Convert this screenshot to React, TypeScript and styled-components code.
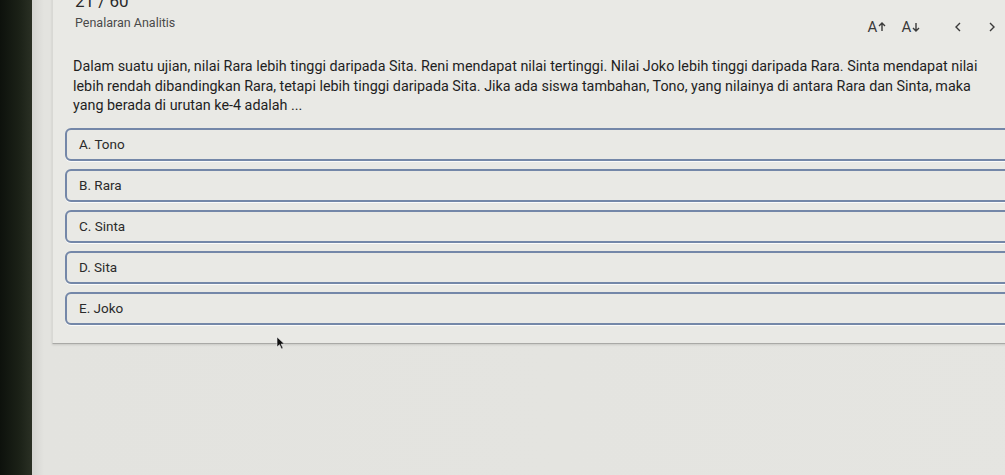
import React from 'react'
import styled, { createGlobalStyle } from 'styled-components'

const GlobalStyle = createGlobalStyle`
  html, body {
    margin: 0;
    padding: 0;
    background: #e2e2de;
    overflow: hidden;
  }
  body {
    font-family: Roboto, "Noto Sans", Arial, sans-serif;
  }
`

const Frame = styled.div`
  width: 1005px;
  height: 475px;
  display: flex;
  overflow: hidden;
  position: relative;
`

const Bezel = styled.div`
  width: 32px;
  flex-shrink: 0;
  background: linear-gradient(90deg, #0d110c 0%, #1b2117 60%, #2a3024 100%);
`

const Screen = styled.div`
  flex: 1;
  display: flex;
  flex-direction: column;
  background: linear-gradient(90deg, #d4d4d1 0px, #e3e3df 12px, #e5e5e1 100%);
  padding-left: 20px;
`

const Card = styled.div`
  width: 1010px;
  flex-shrink: 0;
  background: #e9e9e5;
  border-left: 1px solid #d8d8d4;
  border-bottom: 1px solid #a9a9a6;
  box-shadow: 0 1px 2px rgba(0, 0, 0, 0.12);
  padding: 0 0 18px 12px;
  margin-top: -9px;
`

const Header = styled.div`
  display: flex;
  align-items: flex-start;
  justify-content: space-between;
  padding-left: 10px;
`

const Titles = styled.div`
  display: flex;
  flex-direction: column;
`

const Counter = styled.div`
  font-size: 17px;
  color: #2a2a2a;
  line-height: 20px;
`

const Section = styled.div`
  font-size: 12.5px;
  color: #4a4a4a;
  margin-top: 4px;
`

const Tools = styled.div`
  display: flex;
  align-items: center;
  margin-top: 27px;
  margin-right: 79px;
`

const ToolButton = styled.span<{ $w: number }>`
  display: inline-flex;
  align-items: center;
  justify-content: center;
  width: ${(p) => p.$w}px;
  font-size: 15px;
  color: #3a3a3a;
`

const Question = styled.p`
  margin: 21px 0 0 8px;
  font-size: 14.35px;
  line-height: 19.5px;
  color: #1f1f1f;
  white-space: nowrap;
`

const Options = styled.div`
  display: flex;
  flex-direction: column;
  gap: 8px;
  margin-top: 12px;
`

const Option = styled.div`
  height: 33px;
  box-sizing: border-box;
  border: 2px solid #7487a8;
  border-radius: 6px;
  display: flex;
  align-items: center;
  padding-left: 12px;
  font-size: 13.5px;
  color: #2b2b2b;
  box-shadow: 0 1px 0 rgba(255, 255, 255, 0.8);
`

const Pointer = styled.svg`
  position: absolute;
  left: 276px;
  top: 336px;
`

const Arrow = ({ down }: { down?: boolean }) => (
  <svg width="8" height="10" viewBox="0 0 8 10" style={{ marginLeft: 1 }}>
    {down ? (
      <path d="M4 1v8M1 6l3 3 3-3" stroke="#3a3a3a" strokeWidth="1.4" fill="none" />
    ) : (
      <path d="M4 9V1M1 4l3-3 3 3" stroke="#3a3a3a" strokeWidth="1.4" fill="none" />
    )}
  </svg>
)

const Chevron = ({ right }: { right?: boolean }) => (
  <svg width="8" height="12" viewBox="0 0 8 12">
    <path
      d={right ? 'M2 2l4 4-4 4' : 'M6 2L2 6l4 4'}
      stroke="#3a3a3a"
      strokeWidth="1.4"
      fill="none"
    />
  </svg>
)

const options = ['A. Tono', 'B. Rara', 'C. Sinta', 'D. Sita', 'E. Joko']

export default function App() {
  return (
    <>
      <GlobalStyle />
      <Frame>
        <Bezel />
        <Screen>
          <Card>
            <Header>
              <Titles>
                <Counter>21 / 60</Counter>
                <Section>Penalaran Analitis</Section>
              </Titles>
              <Tools>
                <ToolButton $w={34}>
                  A<Arrow />
                </ToolButton>
                <ToolButton $w={34}>
                  A<Arrow down />
                </ToolButton>
                <ToolButton $w={60}>
                  <Chevron />
                </ToolButton>
                <ToolButton $w={8}>
                  <Chevron right />
                </ToolButton>
              </Tools>
            </Header>
            <Question>
              Dalam suatu ujian, nilai Rara lebih tinggi daripada Sita. Reni mendapat nilai tertinggi. Nilai Joko lebih tinggi daripada Rara. Sinta mendapat nilai
              <br />
              lebih rendah dibandingkan Rara, tetapi lebih tinggi daripada Sita. Jika ada siswa tambahan, Tono, yang nilainya di antara Rara dan Sinta, maka
              <br />
              yang berada di urutan ke-4 adalah ...
            </Question>
            <Options>
              {options.map((o) => (
                <Option key={o}>{o}</Option>
              ))}
            </Options>
          </Card>
        </Screen>
        <Pointer width="10" height="14" viewBox="0 0 10 14">
          <path d="M1 1v10l2.5-2.3L5.5 13l1.6-.7-2-4.2H8.5z" fill="#111" stroke="#eee" strokeWidth="0.6" />
        </Pointer>
      </Frame>
    </>
  )
}
